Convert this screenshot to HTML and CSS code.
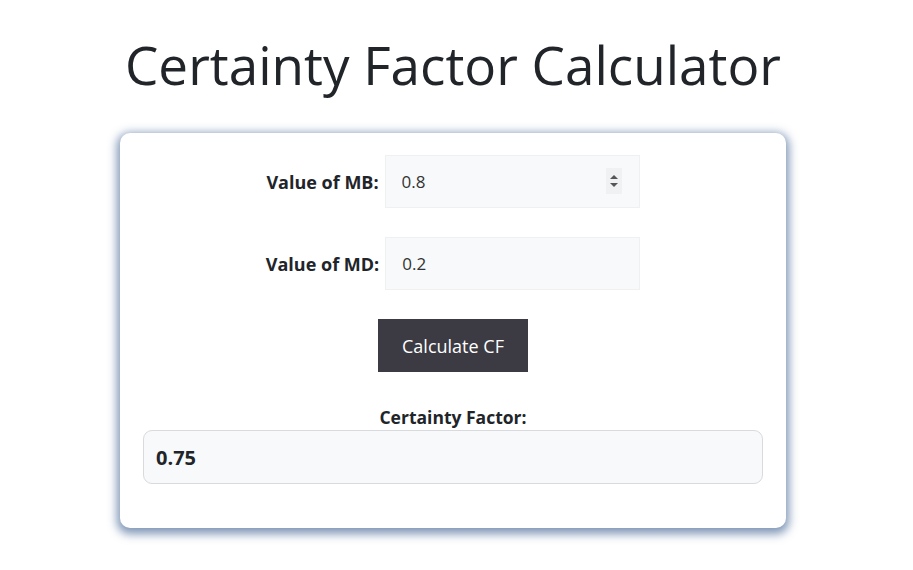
FILE: index.html
```html
<!DOCTYPE html>
<html lang="en">
<head>
  <meta charset="UTF-8">
  <meta name="viewport" content="width=device-width, initial-scale=1.0">
  <title>Certainty Factor Calculator</title>
  <link rel="stylesheet" href="styles.css">
</head>
<body>
  <h1 class="title">Certainty Factor Calculator</h1>

  <!-- Calculator card -->
  <div class="card">
    <div class="field">
      <label for="mb">Value of MB:</label>
      <div class="input-wrap">
        <input type="text" id="mb" value="0.8">
        <span class="spinner">
          <svg width="10" height="14" viewBox="0 0 10 14">
            <path d="M1 5 L5 1 L9 5 Z" fill="#555"/>
            <path d="M1 9 L5 13 L9 9 Z" fill="#555"/>
          </svg>
        </span>
      </div>
    </div>

    <div class="field">
      <label for="md">Value of MD:</label>
      <div class="input-wrap">
        <input type="text" id="md" value="0.2">
      </div>
    </div>

    <button class="calc-btn" type="button">Calculate CF</button>

    <div class="result">
      <h3>Certainty Factor:</h3>
      <div class="result-box">0.75</div>
    </div>
  </div>
</body>
</html>
```

FILE: styles.css
```css
/* Base */
html {
  min-height: 100%;
}

body {
  margin: 0;
  padding: 0 7px 42px 0;
  background-color: #fff;
  color: #212529;
  font-family: "Open Sans", "Noto Sans", sans-serif;
}

.title {
  margin: 25px 0 0;
  font-size: 53px;
  font-weight: 400;
  text-align: center;
  line-height: 80px;
}

/* Card */
.card {
  width: 620px;
  margin: 28px auto 0;
  padding: 22px 23px 44px;
  background-color: #fff;
  border-radius: 10px;
  box-shadow: 0 3px 10px 3px rgba(60, 95, 145, 0.65);
  display: flex;
  flex-direction: column;
  align-items: center;
}

.field {
  display: flex;
  align-items: center;
  gap: 6px;
  margin-bottom: 29px;
}

.field label {
  font-weight: 700;
  font-size: 18px;
}

.input-wrap {
  position: relative;
}

.input-wrap input {
  box-sizing: border-box;
  width: 255px;
  height: 53px;
  padding: 0 16px;
  font: inherit;
  font-size: 17px;
  color: #333;
  background-color: #f8f9fa;
  border: 1px solid #eef0f2;
  outline: none;
}

.spinner {
  position: absolute;
  top: 13px;
  right: 18px;
  width: 16px;
  height: 26px;
  display: flex;
  align-items: center;
  justify-content: center;
  background-color: #f0f1f2;
}

/* Button */
.calc-btn {
  width: 150px;
  height: 53px;
  margin-bottom: 33px;
  font: inherit;
  font-size: 18px;
  color: #fff;
  background-color: #3c3b43;
  border: none;
  border-radius: 0;
}

/* Result */
.result {
  width: 100%;
  text-align: center;
}

.result h3 {
  margin: 0 0 1px;
  font-size: 17.5px;
  font-weight: 700;
}

.result-box {
  box-sizing: border-box;
  height: 54px;
  padding: 0 12px;
  display: flex;
  align-items: center;
  font-size: 20px;
  font-weight: 700;
  text-align: left;
  background-color: #f8f9fa;
  border: 1px solid #d8dadd;
  border-radius: 9px;
}
```
